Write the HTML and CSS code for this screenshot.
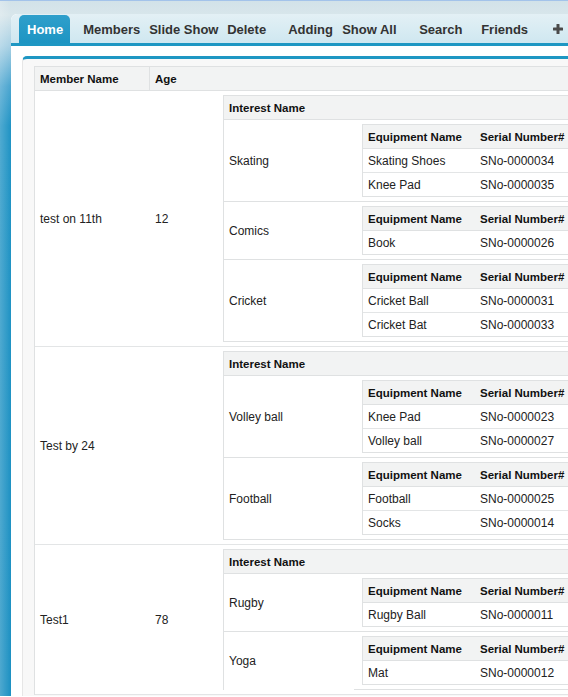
FILE: index.html
```html
<!DOCTYPE html>
<html>
<head>
<meta charset="utf-8">
<title>Members</title>
<link rel="stylesheet" href="styles.css">
</head>
<body>
<div class="page">
  <div class="app">
    <nav class="tabbar">
      <a class="tab tab-active">Home</a>
      <div class="tabs">
        <a class="tab t-members">Members</a>
        <a class="tab t-slide">Slide Show</a>
        <a class="tab t-delete">Delete</a>
        <a class="tab t-adding">Adding</a>
        <a class="tab t-showall">Show All</a>
        <a class="tab t-search">Search</a>
        <a class="tab t-friends">Friends</a>
        <a class="tab t-plus"><svg width="10" height="10" viewBox="0 0 10 10"><rect x="0" y="3.5" width="10" height="3" rx="0.6" fill="#4a4a4a"/><rect x="3.5" y="0" width="3" height="10" rx="0.6" fill="#4a4a4a"/></svg></a>
      </div>
    </nav>
    <div class="content">
      <div class="panel">
        <table class="list members">
          <thead>
            <tr><th class="m-name div">Member Name</th><th class="m-age">Age</th><th class="m-int"></th></tr>
          </thead>
          <tbody>
            <tr>
              <td class="m-name">test on 11th</td>
              <td class="m-age">12</td>
              <td class="m-int">
                <table class="list interests">
                  <thead><tr><th class="i-name">Interest Name</th><th class="i-eq"></th></tr></thead>
                  <tbody>
                    <tr>
                      <td class="i-name">Skating</td>
                      <td class="i-eq">
                        <table class="list equip">
                          <thead><tr><th class="e-name">Equipment Name</th><th class="e-sn">Serial Number#</th></tr></thead>
                          <tbody>
                            <tr><td class="e-name">Skating Shoes</td><td class="e-sn">SNo-0000034</td></tr>
                            <tr><td class="e-name">Knee Pad</td><td class="e-sn">SNo-0000035</td></tr>
                          </tbody>
                        </table>
                      </td>
                    </tr>
                    <tr>
                      <td class="i-name">Comics</td>
                      <td class="i-eq">
                        <table class="list equip">
                          <thead><tr><th class="e-name">Equipment Name</th><th class="e-sn">Serial Number#</th></tr></thead>
                          <tbody>
                            <tr><td class="e-name">Book</td><td class="e-sn">SNo-0000026</td></tr>
                          </tbody>
                        </table>
                      </td>
                    </tr>
                    <tr>
                      <td class="i-name">Cricket</td>
                      <td class="i-eq">
                        <table class="list equip">
                          <thead><tr><th class="e-name">Equipment Name</th><th class="e-sn">Serial Number#</th></tr></thead>
                          <tbody>
                            <tr><td class="e-name">Cricket Ball</td><td class="e-sn">SNo-0000031</td></tr>
                            <tr><td class="e-name">Cricket Bat</td><td class="e-sn">SNo-0000033</td></tr>
                          </tbody>
                        </table>
                      </td>
                    </tr>
                  </tbody>
                </table>
              </td>
            </tr>
            <tr>
              <td class="m-name">Test by 24</td>
              <td class="m-age"></td>
              <td class="m-int">
                <table class="list interests">
                  <thead><tr><th class="i-name">Interest Name</th><th class="i-eq"></th></tr></thead>
                  <tbody>
                    <tr>
                      <td class="i-name">Volley ball</td>
                      <td class="i-eq">
                        <table class="list equip">
                          <thead><tr><th class="e-name">Equipment Name</th><th class="e-sn">Serial Number#</th></tr></thead>
                          <tbody>
                            <tr><td class="e-name">Knee Pad</td><td class="e-sn">SNo-0000023</td></tr>
                            <tr><td class="e-name">Volley ball</td><td class="e-sn">SNo-0000027</td></tr>
                          </tbody>
                        </table>
                      </td>
                    </tr>
                    <tr>
                      <td class="i-name">Football</td>
                      <td class="i-eq">
                        <table class="list equip">
                          <thead><tr><th class="e-name">Equipment Name</th><th class="e-sn">Serial Number#</th></tr></thead>
                          <tbody>
                            <tr><td class="e-name">Football</td><td class="e-sn">SNo-0000025</td></tr>
                            <tr><td class="e-name">Socks</td><td class="e-sn">SNo-0000014</td></tr>
                          </tbody>
                        </table>
                      </td>
                    </tr>
                  </tbody>
                </table>
              </td>
            </tr>
            <tr>
              <td class="m-name">Test1</td>
              <td class="m-age">78</td>
              <td class="m-int">
                <table class="list interests">
                  <thead><tr><th class="i-name">Interest Name</th><th class="i-eq"></th></tr></thead>
                  <tbody>
                    <tr>
                      <td class="i-name">Rugby</td>
                      <td class="i-eq">
                        <table class="list equip">
                          <thead><tr><th class="e-name">Equipment Name</th><th class="e-sn">Serial Number#</th></tr></thead>
                          <tbody>
                            <tr><td class="e-name">Rugby Ball</td><td class="e-sn">SNo-0000011</td></tr>
                          </tbody>
                        </table>
                      </td>
                    </tr>
                    <tr>
                      <td class="i-name open">Yoga</td>
                      <td class="i-eq">
                        <table class="list equip">
                          <thead><tr><th class="e-name">Equipment Name</th><th class="e-sn">Serial Number#</th></tr></thead>
                          <tbody>
                            <tr><td class="e-name">Mat</td><td class="e-sn">SNo-0000012</td></tr>
                          </tbody>
                        </table>
                      </td>
                    </tr>
                  </tbody>
                </table>
              </td>
            </tr>
          </tbody>
        </table>
      </div>
    </div>
  </div>
</div>
</body>
</html>
```

FILE: styles.css
```css
html, body {
  margin: 0;
  padding: 0;
}

body {
  width: 568px;
  height: 697px;
  overflow: hidden;
  font-family: "Liberation Sans", Arial, sans-serif;
  color: #222;
}

.page {
  height: 696px;
  border-top: 1px solid #a3c3ea;
  padding: 13px 0 0 11px;
  box-sizing: border-box;
  background:
    linear-gradient(to right, rgba(255,255,255,0.22), rgba(255,255,255,0) 11px),
    linear-gradient(to bottom, #d2e2e9 0, #d8e6eb 14px, #a7d0e4 45px, #4aa5d0 85px, #1f93c4 125px, #1c90c2 100%);
  overflow: hidden;
}

.app {
  width: 600px;
  height: 700px;
  background: #fff;
  border-top-left-radius: 6px;
  overflow: hidden;
}

/* ---------- tab bar ---------- */
.tabbar {
  display: flex;
  align-items: flex-end;
  height: 29px;
  padding-left: 8px;
  background: linear-gradient(to bottom, #e3f0f5 0, #d9ecf3 50%, #cfe7f0 100%);
  border-bottom: 3px solid #1e97c3;
  border-top-left-radius: 6px;
}

.tab {
  display: flex;
  align-items: center;
  height: 28px;
  font-size: 13px;
  font-weight: bold;
  color: #333;
  white-space: nowrap;
  cursor: pointer;
}

.tab-active {
  padding: 0 7px 0 8px;
  color: #fff;
  background: linear-gradient(to bottom, #2f9fcb 0, #1d95c3 100%);
  border-top-left-radius: 5px;
  border-top-right-radius: 5px;
}

.tabs {
  display: flex;
  padding-left: 13px;
}

.t-members { width: 66px; }
.t-slide { width: 78px; }
.t-delete { width: 61px; }
.t-adding { width: 54px; }
.t-showall { width: 77px; }
.t-search { width: 62px; }
.t-friends { width: 72px; }
.t-plus { width: 10px; }

/* ---------- content ---------- */
.content {
  padding: 10px 0 0 11px;
}

.panel {
  background: #f8f8f8;
  border-top: 3px solid #1e97c3;
  border-left: 1px solid #e6e6e6;
  border-top-left-radius: 5px;
  padding: 7px 0 0 11px;
  height: 700px;
}

/* ---------- tables ---------- */
.list {
  border-collapse: separate;
  border-spacing: 0;
  background: #fff;
  border: 1px solid #dfe1e2;
}

.list th {
  background: #f2f3f3;
  font-size: 11.5px;
  font-weight: bold;
  color: #111;
  text-align: left;
  line-height: 21px;
  padding: 2px 5px 0;
  border-bottom: 1px solid #dfe1e2;
  white-space: nowrap;
}

.list td {
  font-size: 12px;
  color: #222;
  line-height: 21px;
  padding: 2px 5px 0;
  vertical-align: middle;
  white-space: nowrap;
}

/* members */
.members {
  border-bottom: 0;
}

.members > tbody > tr > td {
  border-bottom: 1px solid #e3e5e6;
}

.members th.div {
  border-right: 1px solid #dfe1e2;
}

th.m-name { width: 104px; }
td.m-name { width: 105px; }
.m-age { width: 59px; }

th.m-int {
  padding: 0;
}

td.m-int {
  padding: 4px 0 4px 4px;
  vertical-align: top;
}

/* interests */
.interests {
  border-bottom: 0;
}

.i-name { width: 120px; }

th.i-eq {
  padding: 0;
}

.interests > tbody > tr > td {
  border-bottom: 1px solid #dfe1e2;
}

.interests > tbody > tr > td.open {
  border-bottom-color: transparent;
}

td.i-eq {
  padding: 4px 0 4px 8px;
}

/* equipment */
.e-name { width: 102px; }
.e-sn { width: 100px; }

.equip > tbody > tr > td {
  border-bottom: 1px solid #e3e5e6;
}

.equip > tbody > tr:last-child > td {
  border-bottom: 0;
}
```
